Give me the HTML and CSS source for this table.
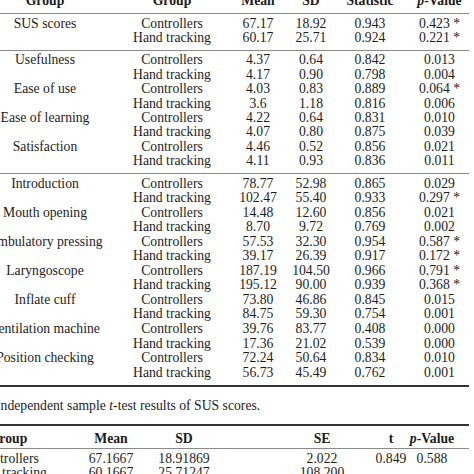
FILE: index.html
```html
<!DOCTYPE html>
<html>
<head>
<meta charset="utf-8">
<link rel="stylesheet" href="styles.css">
</head>
<body>
<div class="page">
  <div class="t1">
    <div class="row head">
      <div class="c c1">Group</div><div class="c c2">Group</div><div class="c c3">Mean</div><div class="c c4">SD</div><div class="c c5">Statistic</div><div class="c c6"><i>p</i>-Value</div>
    </div>
    <div class="sec first">
      <div class="row"><div class="c c1">SUS scores</div><div class="c c2">Controllers</div><div class="c c3">67.17</div><div class="c c4">18.92</div><div class="c c5">0.943</div><div class="c c6">0.423 *</div></div>
      <div class="row"><div class="c c1"></div><div class="c c2">Hand tracking</div><div class="c c3">60.17</div><div class="c c4">25.71</div><div class="c c5">0.924</div><div class="c c6">0.221 *</div></div>
    </div>
    <div class="sec">
      <div class="row"><div class="c c1">Usefulness</div><div class="c c2">Controllers</div><div class="c c3">4.37</div><div class="c c4">0.64</div><div class="c c5">0.842</div><div class="c c6">0.013</div></div>
      <div class="row"><div class="c c1"></div><div class="c c2">Hand tracking</div><div class="c c3">4.17</div><div class="c c4">0.90</div><div class="c c5">0.798</div><div class="c c6">0.004</div></div>
      <div class="row"><div class="c c1">Ease of use</div><div class="c c2">Controllers</div><div class="c c3">4.03</div><div class="c c4">0.83</div><div class="c c5">0.889</div><div class="c c6">0.064 *</div></div>
      <div class="row"><div class="c c1"></div><div class="c c2">Hand tracking</div><div class="c c3">3.6</div><div class="c c4">1.18</div><div class="c c5">0.816</div><div class="c c6">0.006</div></div>
      <div class="row"><div class="c c1">Ease of learning</div><div class="c c2">Controllers</div><div class="c c3">4.22</div><div class="c c4">0.64</div><div class="c c5">0.831</div><div class="c c6">0.010</div></div>
      <div class="row"><div class="c c1"></div><div class="c c2">Hand tracking</div><div class="c c3">4.07</div><div class="c c4">0.80</div><div class="c c5">0.875</div><div class="c c6">0.039</div></div>
      <div class="row"><div class="c c1">Satisfaction</div><div class="c c2">Controllers</div><div class="c c3">4.46</div><div class="c c4">0.52</div><div class="c c5">0.856</div><div class="c c6">0.021</div></div>
      <div class="row"><div class="c c1"></div><div class="c c2">Hand tracking</div><div class="c c3">4.11</div><div class="c c4">0.93</div><div class="c c5">0.836</div><div class="c c6">0.011</div></div>
    </div>
    <div class="sec last">
      <div class="row"><div class="c c1">Introduction</div><div class="c c2">Controllers</div><div class="c c3">78.77</div><div class="c c4">52.98</div><div class="c c5">0.865</div><div class="c c6">0.029</div></div>
      <div class="row"><div class="c c1"></div><div class="c c2">Hand tracking</div><div class="c c3">102.47</div><div class="c c4">55.40</div><div class="c c5">0.933</div><div class="c c6">0.297 *</div></div>
      <div class="row"><div class="c c1">Mouth opening</div><div class="c c2">Controllers</div><div class="c c3">14.48</div><div class="c c4">12.60</div><div class="c c5">0.856</div><div class="c c6">0.021</div></div>
      <div class="row"><div class="c c1"></div><div class="c c2">Hand tracking</div><div class="c c3">8.70</div><div class="c c4">9.72</div><div class="c c5">0.769</div><div class="c c6">0.002</div></div>
      <div class="row"><div class="c c1">Ambulatory pressing</div><div class="c c2">Controllers</div><div class="c c3">57.53</div><div class="c c4">32.30</div><div class="c c5">0.954</div><div class="c c6">0.587 *</div></div>
      <div class="row"><div class="c c1"></div><div class="c c2">Hand tracking</div><div class="c c3">39.17</div><div class="c c4">26.39</div><div class="c c5">0.917</div><div class="c c6">0.172 *</div></div>
      <div class="row"><div class="c c1">Laryngoscope</div><div class="c c2">Controllers</div><div class="c c3">187.19</div><div class="c c4">104.50</div><div class="c c5">0.966</div><div class="c c6">0.791 *</div></div>
      <div class="row"><div class="c c1"></div><div class="c c2">Hand tracking</div><div class="c c3">195.12</div><div class="c c4">90.00</div><div class="c c5">0.939</div><div class="c c6">0.368 *</div></div>
      <div class="row"><div class="c c1">Inflate cuff</div><div class="c c2">Controllers</div><div class="c c3">73.80</div><div class="c c4">46.86</div><div class="c c5">0.845</div><div class="c c6">0.015</div></div>
      <div class="row"><div class="c c1"></div><div class="c c2">Hand tracking</div><div class="c c3">84.75</div><div class="c c4">59.30</div><div class="c c5">0.754</div><div class="c c6">0.001</div></div>
      <div class="row"><div class="c c1">Ventilation machine</div><div class="c c2">Controllers</div><div class="c c3">39.76</div><div class="c c4">83.77</div><div class="c c5">0.408</div><div class="c c6">0.000</div></div>
      <div class="row"><div class="c c1"></div><div class="c c2">Hand tracking</div><div class="c c3">17.36</div><div class="c c4">21.02</div><div class="c c5">0.539</div><div class="c c6">0.000</div></div>
      <div class="row"><div class="c c1">Position checking</div><div class="c c2">Controllers</div><div class="c c3">72.24</div><div class="c c4">50.64</div><div class="c c5">0.834</div><div class="c c6">0.010</div></div>
      <div class="row"><div class="c c1"></div><div class="c c2">Hand tracking</div><div class="c c3">56.73</div><div class="c c4">45.49</div><div class="c c5">0.762</div><div class="c c6">0.001</div></div>
    </div>
  </div>

  <p class="cap">Independent sample <i>t</i>-test results of SUS scores.</p>

  <div class="t2">
    <div class="row head2">
      <div class="c d1">Group</div><div class="c d2">Mean</div><div class="c d3">SD</div><div class="c d4">SE</div><div class="c d5">t</div><div class="c d6"><i>p</i>-Value</div>
    </div>
    <div class="body2">
      <div class="row"><div class="c d1">Controllers</div><div class="c d2">67.1667</div><div class="c d3">18.91869</div><div class="c d4">2.022</div><div class="c d5">0.849</div><div class="c d6">0.588</div></div>
      <div class="row"><div class="c d1">Hand tracking</div><div class="c d2">60.1667</div><div class="c d3">25.71247</div><div class="c d4">108.200</div><div class="c d5"></div><div class="c d6"></div></div>
    </div>
  </div>
</div>
</body>
</html>
```

FILE: styles.css
```css
html, body {
  margin: 0;
  padding: 0;
  background: #ffffff;
}

.page {
  width: 474px;
  height: 474px;
  overflow: hidden;
  font-family: "Liberation Serif", "Times New Roman", serif;
  font-size: 13.7px;
  line-height: 14.43px;
  color: #1c1c1c;
}

.row {
  display: flex;
  height: 14.43px;
}

.c {
  flex: none;
  display: flex;
  justify-content: center;
  white-space: nowrap;
}

/* table 1 */
.t1 {
  margin-top: -5.8px;
  margin-left: -30px;
  width: 499px;
}

.c1 { width: 150px; }
.c2 { width: 104px; }
.c3 { width: 68px; }
.c4 { width: 38px; }
.c5 { width: 80px; }
.c6 { width: 59px; }

.head {
  box-sizing: content-box;
  padding-bottom: 4.3px;
  border-bottom: 1px solid #8a8a8a;
  font-weight: bold;
}

.sec {
  padding: 2.8px 0 4px;
  border-bottom: 1px solid #8a8a8a;
}

.sec.last {
  padding-bottom: 4.4px;
  border-bottom: 2px solid #333333;
}

.sec.last .row {
  height: 14.55px;
}

/* caption */
.cap {
  margin: 12.5px 0 10.5px -4px;
  white-space: nowrap;
}

/* table 2 */
.t2 {
  margin-left: -40px;
  width: 509px;
  border-top: 2px solid #333333;
}

.head2 {
  box-sizing: content-box;
  padding: 5.5px 0 2.5px;
  border-bottom: 1px solid #8a8a8a;
  font-weight: bold;
}

.body2 {
  padding-top: 2.5px;
}

.d1 { width: 96px; }
.d2 { width: 60px; margin-left: 25px; }
.d3 { width: 60px; margin-left: 13px; }
.d4 { width: 60px; margin-left: 78px; }
.d5 { width: 36px; margin-left: 21px; }
.d6 { width: 46px; }
```
